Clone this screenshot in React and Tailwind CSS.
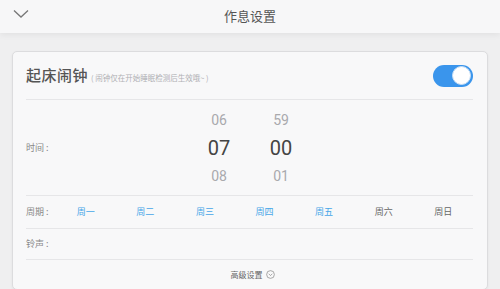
import React, { useState } from 'react';

const days = [
  { label: '周一', on: true },
  { label: '周二', on: true },
  { label: '周三', on: true },
  { label: '周四', on: true },
  { label: '周五', on: true },
  { label: '周六', on: false },
  { label: '周日', on: false },
];

export default function App() {
  const [enabled, setEnabled] = useState(true);

  return (
    <div
      className="w-[500px] h-[289px] overflow-hidden bg-[#efeff0] flex flex-col"
      style={{ fontFamily: '"Noto Sans CJK SC", "Noto Sans", sans-serif' }}
    >
      {/* Header */}
      <div className="h-[33px] shrink-0 bg-[#f7f7f8] flex items-center relative shadow-[0_2px_6px_rgba(0,0,0,0.06)] z-10">
        <svg className="absolute left-[13px] top-[9px]" width="16" height="10" viewBox="0 0 16 10">
          <polyline points="1,1.5 8,8 15,1.5" fill="none" stroke="#777" strokeWidth="1.3" />
        </svg>
        <div className="flex-1 text-center text-[13px] text-[#555] leading-none mb-[3px]">作息设置</div>
      </div>

      {/* Card */}
      <div className="mx-[12px] mt-[18px] bg-[#f8f8f9] border border-[#dcdcde] rounded-[5px] pl-[13px] pr-[14px] flex-1 shadow-[0_1px_3px_rgba(0,0,0,0.05)]">
        <div className="h-[47px] flex items-center">
          <span className="text-[15px] font-medium text-[#555] tracking-[0.5px]">起床闹钟</span>
          <span className="text-[7.5px] text-[#b0b0b4] ml-[3px] mt-[4px]">( 闹钟仅在开始睡眠检测后生效哦~ )</span>
          <button
            onClick={() => setEnabled(!enabled)}
            className={`ml-auto w-[40px] h-[22px] rounded-full flex items-center p-[2px] ${enabled ? 'bg-[#3a95ec] justify-end' : 'bg-[#ccc] justify-start'}`}
          >
            <span className="w-[19px] h-[19px] rounded-full bg-white border border-[#c9dff5]" />
          </button>
        </div>

        <div className="border-t border-[#e6e6e8] h-[96px] flex items-center">
          <span className="text-[9px] text-[#888] w-[60px]">时间 :</span>
          <div className="flex gap-[38px] ml-[121px] text-center" style={{ fontFamily: 'Roboto, "Noto Sans", sans-serif' }}>
            <div className="flex flex-col items-center w-[24px]">
              <span className="text-[14px] leading-[28px] text-[#a9a9ad]">06</span>
              <span className="text-[20px] leading-[28px] text-[#444]">07</span>
              <span className="text-[14px] leading-[28px] text-[#a9a9ad]">08</span>
            </div>
            <div className="flex flex-col items-center w-[24px]">
              <span className="text-[14px] leading-[28px] text-[#a9a9ad]">59</span>
              <span className="text-[20px] leading-[28px] text-[#444]">00</span>
              <span className="text-[14px] leading-[28px] text-[#a9a9ad]">01</span>
            </div>
          </div>
        </div>

        <div className="border-t border-[#e6e6e8] h-[33px] flex items-center">
          <span className="text-[9px] text-[#888] w-[30px]">周期 :</span>
          <div className="flex-1 grid grid-cols-7">
            {days.map(d => (
              <span key={d.label} className={`text-center text-[9px] ${d.on ? 'text-[#46a6e8]' : 'text-[#666]'}`}>
                {d.label}
              </span>
            ))}
          </div>
        </div>

        <div className="border-t border-[#e6e6e8] h-[31px] flex items-center">
          <span className="text-[9px] text-[#888]">铃声 :</span>
        </div>

        <div className="border-t border-[#e6e6e8] h-[30px] flex items-center justify-center gap-[3px] pl-[6px]">
          <span className="text-[8px] text-[#666]">高级设置</span>
          <svg width="9" height="9" viewBox="0 0 10 10">
            <circle cx="5" cy="5" r="4.3" fill="none" stroke="#888" strokeWidth="0.8" />
            <polyline points="3,4.2 5,6.2 7,4.2" fill="none" stroke="#888" strokeWidth="0.8" />
          </svg>
        </div>
      </div>
    </div>
  );
}
